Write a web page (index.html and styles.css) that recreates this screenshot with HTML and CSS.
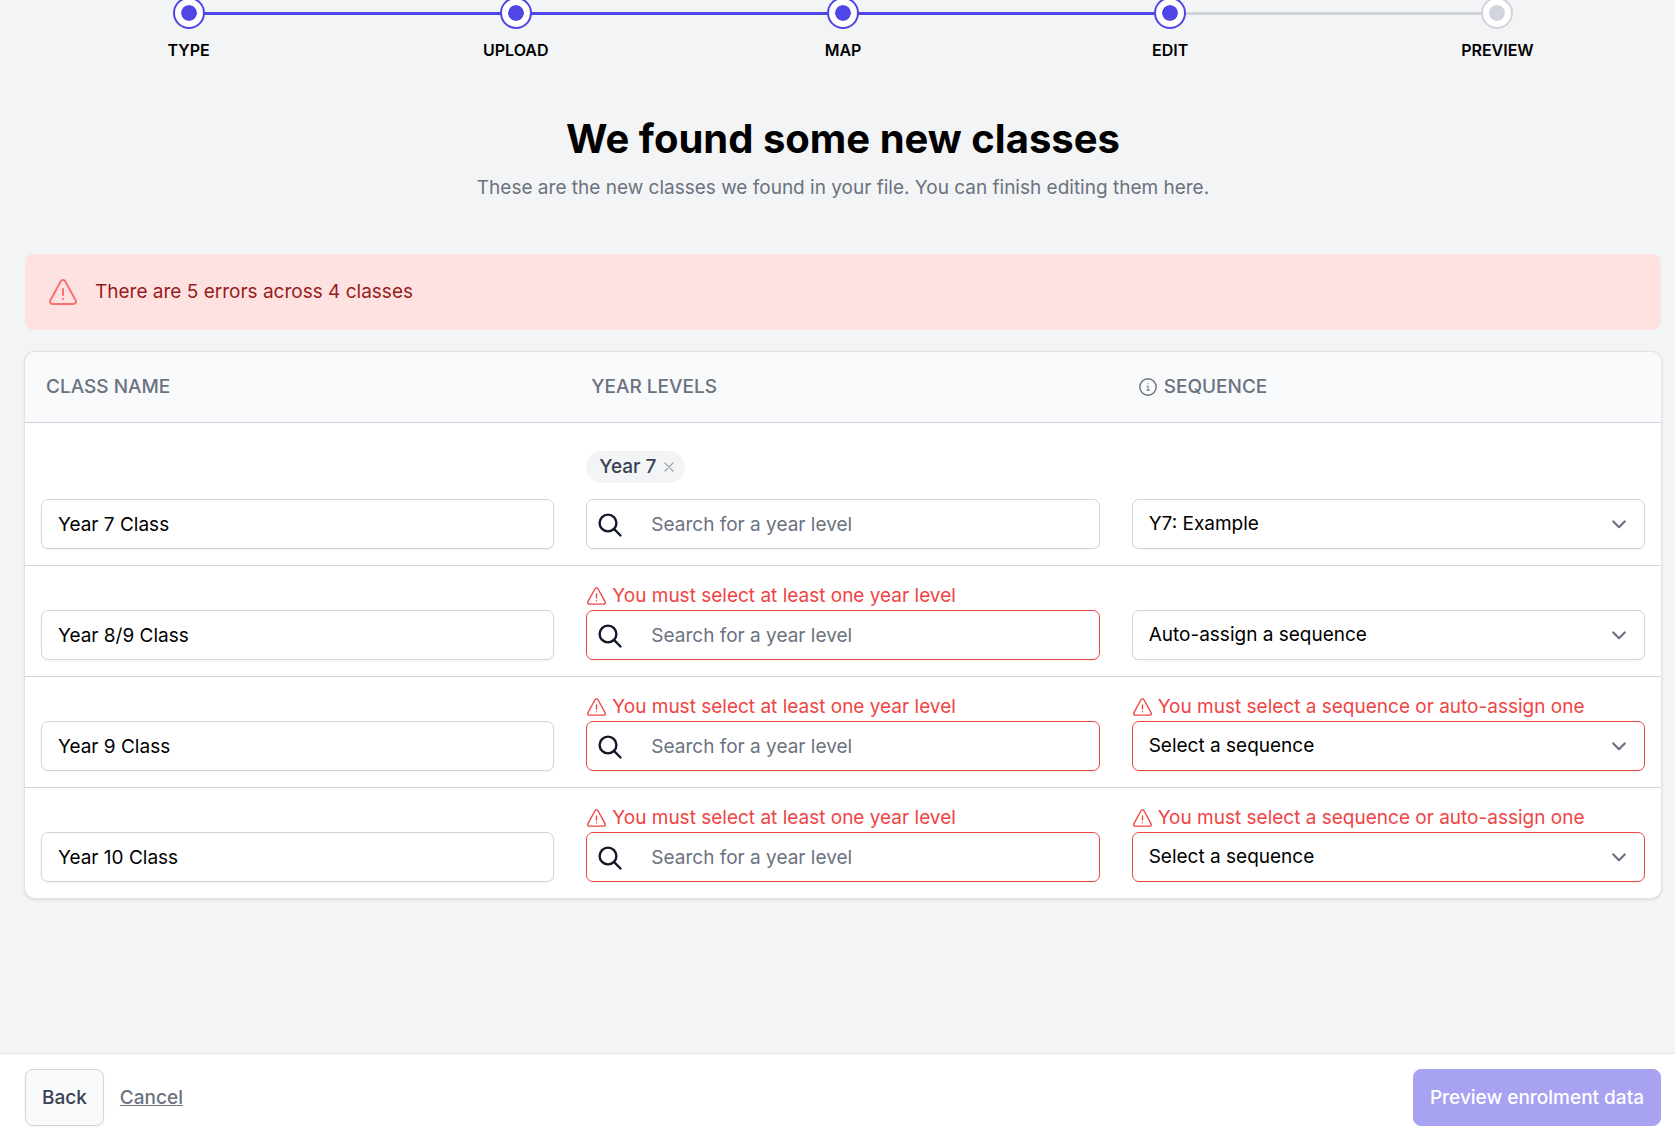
FILE: index.html
```html
<!DOCTYPE html>
<html lang="en">
<head>
<meta charset="utf-8">
<title>Edit classes</title>
<meta name="viewport" content="width=device-width, initial-scale=1">
<link rel="stylesheet" href="styles.css">
</head>
<body>
<svg class="sprite" aria-hidden="true">
  <symbol id="warning" viewBox="0 0 28 26" fill="none" stroke="currentColor" stroke-linecap="round" stroke-linejoin="round">
    <path d="M11.8 2.3 1.4 21.2A2.5 2.5 0 0 0 3.6 25h20.8a2.5 2.5 0 0 0 2.2-3.8L16.2 2.3a2.5 2.5 0 0 0-4.4 0Z"/>
    <path d="M14 10v6M14 19.8v.2"/>
  </symbol>
  <symbol id="search" viewBox="0 0 24 24" fill="none" stroke="currentColor" stroke-width="2.4" stroke-linecap="round">
    <circle cx="10" cy="10" r="8.4"/>
    <path d="m16.2 16.2 6.3 6.3"/>
  </symbol>
  <symbol id="chevron" viewBox="0 0 14 9" fill="none" stroke="currentColor" stroke-width="2.2" stroke-linecap="round" stroke-linejoin="round">
    <path d="m1.3 1.4 5.7 5.8 5.7-5.8"/>
  </symbol>
</svg>

<main class="page">
  <ol class="stepper">
    <li class="step done"><span class="step-dot"></span>Type</li>
    <li class="step done"><span class="step-dot"></span>Upload</li>
    <li class="step done"><span class="step-dot"></span>Map</li>
    <li class="step done" aria-current="step"><span class="step-dot"></span>Edit</li>
    <li class="step"><span class="step-dot"></span>Preview</li>
  </ol>

  <header class="intro">
    <h1>We found some new classes</h1>
    <p>These are the new classes we found in your file. You can finish editing them here.</p>
  </header>

  <div class="alert" role="alert">
    <svg class="alert-icon"><use href="#warning"/></svg>
    <span>There are 5 errors across 4 classes</span>
  </div>

  <table class="classes">
    <thead>
      <tr>
        <th scope="col">Class name</th>
        <th scope="col">Year levels</th>
        <th scope="col">
          <span class="with-icon">
            <svg class="info-icon" viewBox="0 0 18 18" fill="none" stroke="currentColor" stroke-linecap="round"><circle cx="9" cy="9" r="8.2" stroke-width="1.4"/><path d="M8 8h1.1v4M7.8 12.2h2.6M9 5.6v.2"/></svg>
            Sequence
          </span>
        </th>
      </tr>
    </thead>
    <tbody>
      <tr>
        <td><input class="field" type="text" value="Year 7 Class" aria-label="Class name"></td>
        <td>
          <div class="chips"><span class="chip">Year 7<button class="chip-remove" type="button" aria-label="Remove Year 7"><svg viewBox="0 0 10 10" fill="none" stroke="currentColor" stroke-width="1.3" stroke-linecap="round"><path d="m1 1 8 8M9 1 1 9"/></svg></button></span></div>
          <div class="control"><svg class="search-icon"><use href="#search"/></svg><input class="field search" type="search" placeholder="Search for a year level" aria-label="Year level"></div>
        </td>
        <td><div class="control"><select class="field" aria-label="Sequence"><option>Y7: Example</option></select><svg class="chevron"><use href="#chevron"/></svg></div></td>
      </tr>
      <tr>
        <td><input class="field" type="text" value="Year 8/9 Class" aria-label="Class name"></td>
        <td>
          <label class="error" for="levels-2"><svg class="error-icon"><use href="#warning"/></svg>You must select at least one year level</label>
          <div class="control"><svg class="search-icon"><use href="#search"/></svg><input class="field search invalid" id="levels-2" type="search" placeholder="Search for a year level"></div>
        </td>
        <td><div class="control"><select class="field" aria-label="Sequence"><option>Auto-assign a sequence</option></select><svg class="chevron"><use href="#chevron"/></svg></div></td>
      </tr>
      <tr>
        <td><input class="field" type="text" value="Year 9 Class" aria-label="Class name"></td>
        <td>
          <label class="error" for="levels-3"><svg class="error-icon"><use href="#warning"/></svg>You must select at least one year level</label>
          <div class="control"><svg class="search-icon"><use href="#search"/></svg><input class="field search invalid" id="levels-3" type="search" placeholder="Search for a year level"></div>
        </td>
        <td>
          <label class="error" for="sequence-3"><svg class="error-icon"><use href="#warning"/></svg>You must select a sequence or auto-assign one</label>
          <div class="control"><select class="field invalid" id="sequence-3"><option>Select a sequence</option></select><svg class="chevron"><use href="#chevron"/></svg></div>
        </td>
      </tr>
      <tr>
        <td><input class="field" type="text" value="Year 10 Class" aria-label="Class name"></td>
        <td>
          <label class="error" for="levels-4"><svg class="error-icon"><use href="#warning"/></svg>You must select at least one year level</label>
          <div class="control"><svg class="search-icon"><use href="#search"/></svg><input class="field search invalid" id="levels-4" type="search" placeholder="Search for a year level"></div>
        </td>
        <td>
          <label class="error" for="sequence-4"><svg class="error-icon"><use href="#warning"/></svg>You must select a sequence or auto-assign one</label>
          <div class="control"><select class="field invalid" id="sequence-4"><option>Select a sequence</option></select><svg class="chevron"><use href="#chevron"/></svg></div>
        </td>
      </tr>
    </tbody>
  </table>
</main>

<footer class="actions">
  <button class="button" type="button">Back</button>
  <a class="cancel" href="#">Cancel</a>
  <button class="button primary" type="button" disabled>Preview enrolment data</button>
</footer>
</body>
</html>
```
FILE: styles.css
```css
* {
  box-sizing: border-box;
}

body {
  margin: 0;
  min-height: 100vh;
  display: flex;
  flex-direction: column;
  background: #f3f4f6;
  color: #000;
  font-family: Inter, "Liberation Sans", sans-serif;
  font-size: 19px;
  line-height: 28px;
}

input,
select,
button {
  font: inherit;
}

.sprite {
  display: none;
}

.page {
  flex: 1;
  padding: 0 14px 24px 25px;
}

/* Progress steps; the bar is scrolled slightly past the top edge */
.stepper {
  display: grid;
  grid-template-columns: repeat(5, 1fr);
  margin: -3px 0 0;
  padding: 0;
  list-style: none;
}

.step {
  position: relative;
  display: flex;
  flex-direction: column;
  align-items: center;
  gap: 9px;
  font-size: 16px;
  line-height: 24px;
  font-weight: 600;
  text-transform: uppercase;
  color: #000;
}

.step-dot {
  position: relative;
  z-index: 1;
  width: 32px;
  height: 32px;
  border: 2px solid #d1d5db;
  border-radius: 50%;
  padding: 6px;
  background: #d1d5db content-box;
  box-shadow: inset 0 0 0 6px #fff;
}

.step.done .step-dot {
  border-color: #4f46e5;
  background-color: #4f46e5;
}

.step + .step::before {
  content: "";
  position: absolute;
  top: 15px;
  right: 50%;
  width: 100%;
  height: 3px;
  background: #d1d5db;
}

.step.done + .step.done::before {
  background: #4f46e5;
}

.intro {
  margin: 52px 0;
  text-align: center;
}

h1 {
  margin: 0;
  font-size: 40px;
  line-height: 50px;
  font-weight: 700;
}

.intro p {
  margin: 10px 0 0;
  color: #6b7280;
}

.alert {
  display: flex;
  align-items: center;
  gap: 18px;
  padding: 24px;
  margin-bottom: 22px;
  border-radius: 8px;
  background: #fee2e2;
  color: #991b1b;
}

.alert-icon {
  width: 28px;
  height: 26px;
  color: #f87171;
  stroke-width: 2;
}

.classes {
  width: 100%;
  table-layout: fixed;
  border-collapse: separate;
  border-spacing: 0;
  border-radius: 10px;
  overflow: hidden;
  background: #fff;
  box-shadow: 0 0 0 1px #e0e2e6, 0 1px 3px 1px #0000001a;
}

th {
  padding: 21px;
  background: #f9fafb;
  color: #6b7280;
  font-weight: 500;
  text-align: left;
  text-transform: uppercase;
}

td {
  padding: 16px;
  vertical-align: bottom;
  border-top: 1px solid #d1d5db;
}

.with-icon {
  display: flex;
  align-items: center;
  gap: 7px;
  padding-left: 2px;
}

.info-icon {
  width: 18px;
  height: 18px;
}

.control {
  position: relative;
}

.field {
  display: block;
  width: 100%;
  height: 50px;
  margin: 0;
  padding: 0 16px;
  border: 1px solid #d1d5db;
  border-radius: 7px;
  background: #fff;
  color: #000;
  appearance: none;
  box-shadow: 0 1px 2px #0000000d;
}

.field.search {
  padding-left: 64px;
}

.field.invalid {
  border-color: #ef4444;
}

.field::placeholder {
  color: #6b7280;
  opacity: 1;
}

.search-icon {
  position: absolute;
  top: 14px;
  left: 12px;
  width: 24px;
  height: 24px;
  color: #111827;
}

.chevron {
  position: absolute;
  top: 21px;
  right: 19px;
  width: 14px;
  height: 9px;
  color: #6b7280;
  pointer-events: none;
}

.chips {
  display: flex;
  padding: 12px 0 16px;
}

.chip {
  display: flex;
  align-items: center;
  gap: 8px;
  padding: 2px 11px 2px 13px;
  border-radius: 16px;
  background: #f3f4f6;
  color: #374151;
  font-weight: 500;
}

.chip-remove {
  display: flex;
  padding: 0;
  border: 0;
  background: none;
  color: #9ca3af;
}

.chip-remove svg {
  width: 10px;
  height: 10px;
}

.error {
  display: flex;
  align-items: center;
  gap: 6px;
  padding-left: 1px;
  color: #ef4444;
}

.error-icon {
  width: 19px;
  height: 18px;
  stroke-width: 2;
}

.actions {
  display: flex;
  align-items: center;
  gap: 16px;
  padding: 15px 14px 4px 25px;
  border-top: 1px solid #e5e7eb;
  background: #fff;
}

.button {
  height: 57px;
  padding: 0 16px;
  border: 1px solid #d1d5db;
  border-radius: 8px;
  background: #f9fafb;
  color: #374151;
  font-weight: 500;
  box-shadow: 0 1px 2px #0000000d;
}

.cancel {
  color: #6b7280;
  font-weight: 500;
}

.button.primary {
  margin-left: auto;
  border-color: #a7a2f2;
  background: #a7a2f2;
  color: #fff;
  box-shadow: none;
}
```
